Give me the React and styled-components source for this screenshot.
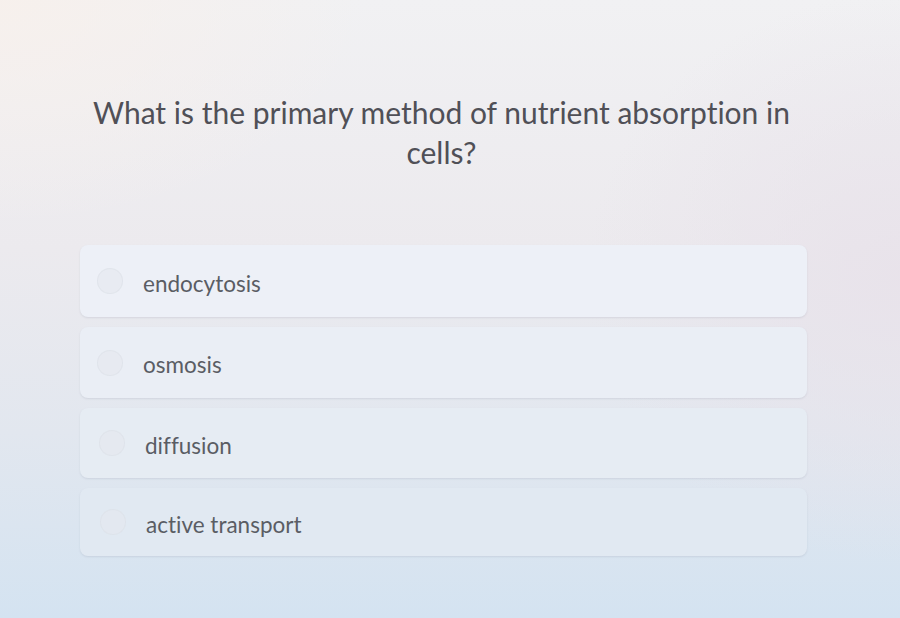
import styled, { createGlobalStyle } from 'styled-components'

const GlobalStyle = createGlobalStyle`
  html, body {
    margin: 0;
    padding: 0;
  }
  body {
    font-family: Lato, "Open Sans", sans-serif;
    font-variant-ligatures: none;
    background: #eceff4;
  }
`

const Page = styled.div`
  width: 900px;
  height: 618px;
  box-sizing: border-box;
  padding: 92px 93px 0 80px;
  overflow: hidden;
  background:
    radial-gradient(ellipse 520px 320px at 0% 0%, rgba(247, 240, 236, 0.95), rgba(247, 240, 236, 0) 70%),
    radial-gradient(ellipse 420px 380px at 100% 45%, rgba(232, 226, 234, 0.9), rgba(232, 226, 234, 0) 75%),
    linear-gradient(180deg, #f1f1f3 0%, #eceaee 40%, #e2e7ef 70%, #d4e3f1 100%);
`

const Question = styled.h1`
  margin: 0 0 73px -4px;
  font-size: 30px;
  line-height: 40px;
  font-weight: 400;
  text-align: center;
  color: #505057;
`

const Options = styled.div`
  width: 727px;
  display: flex;
  flex-direction: column;
  gap: 10px;
`

const Option = styled.label`
  display: flex;
  align-items: center;
  gap: 20px;
  height: ${(p) => p.$h}px;
  padding: 4px 0 0 ${(p) => p.$indent}px;
  box-sizing: border-box;
  border-radius: 8px;
  background: ${(p) => p.$bg};
  box-shadow: 0 1px 2px rgba(120, 130, 150, 0.18);
  cursor: pointer;
`

const Radio = styled.span`
  width: 26px;
  height: 26px;
  flex: none;
  margin-top: -4px;
  border-radius: 50%;
  background: rgba(228, 232, 238, 0.6);
  box-shadow: inset 0 0 0 1px rgba(214, 219, 227, 0.4);
`

const Label = styled.span`
  font-size: 22.5px;
  color: #5a5d64;
`

const answers = [
  { text: 'endocytosis', h: 72, indent: 17, bg: '#edf0f7' },
  { text: 'osmosis', h: 71, indent: 17, bg: '#eaeef5' },
  { text: 'diffusion', h: 70, indent: 19, bg: '#e6ecf3' },
  { text: 'active transport', h: 68, indent: 20, bg: '#e1e9f2' },
]

export default function App() {
  return (
    <>
      <GlobalStyle />
      <Page>
        <Question>
          What is the primary method of nutrient absorption in
          <br />
          cells?
        </Question>
        <Options>
          {answers.map((a) => (
            <Option key={a.text} $h={a.h} $indent={a.indent} $bg={a.bg}>
              <Radio />
              <Label>{a.text}</Label>
            </Option>
          ))}
        </Options>
      </Page>
    </>
  )
}
